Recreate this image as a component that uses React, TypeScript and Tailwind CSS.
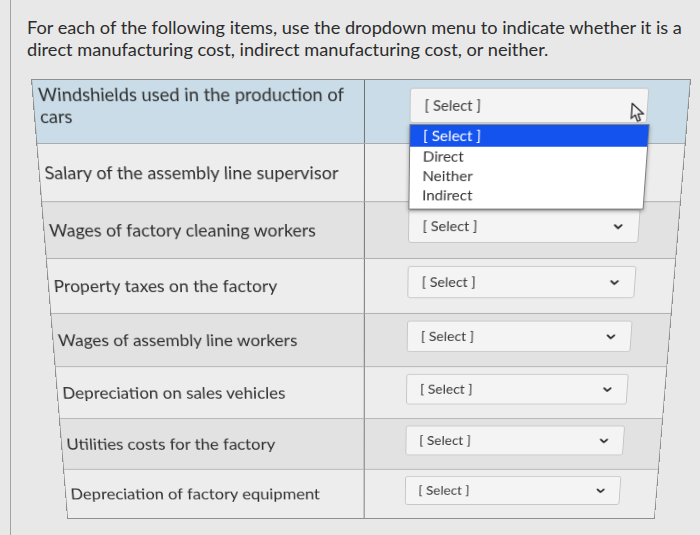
import React from 'react';
import { ChevronDown } from 'lucide-react';

const items = [
  'Windshields used in the production of cars',
  'Salary of the assembly line supervisor',
  'Wages of factory cleaning workers',
  'Property taxes on the factory',
  'Wages of assembly line workers',
  'Depreciation on sales vehicles',
  'Utilities costs for the factory',
  'Depreciation of factory equipment',
];

const options = ['[ Select ]', 'Direct', 'Neither', 'Indirect'];

const rowBg = (i: number) => {
  if (i === 0) return 'bg-[#c9dce7]';
  return i % 2 === 1 ? 'bg-[#ededed]' : 'bg-[#e2e2e2]';
};

const Cursor = () => (
  <svg width="15" height="23" viewBox="0 0 16 24" className="absolute right-[2px] top-[15px]">
    <path
      d="M1 1 L1 18 L5 14 L8 21 L11 20 L8 13 L14 13 Z"
      fill="#f4f4f4"
      stroke="#2a2a2a"
      strokeWidth="1.4"
      strokeLinejoin="round"
    />
  </svg>
);

const SelectBox = ({ open, hidden }: { open?: boolean; hidden?: boolean }) => (
  <div className={`relative h-[37px] w-[240px] ${hidden ? 'invisible' : ''}`}>
    <div className="flex h-full items-center justify-between rounded-[3px] border border-[#c4c4c4] bg-[#f4f4f4] pl-[14px] pr-[14px] text-[15px] text-[#3a3a3a]">
      <span>[ Select ]</span>
      {!open && <ChevronDown size={14} strokeWidth={3.4} className="text-[#2d2d2d]" />}
    </div>
    {open && <Cursor />}
    {open && (
      <div className="visible absolute left-0 top-[38px] z-10 w-[243px] border border-[#7d7d7d] bg-white pb-[4px] text-[15.5px] leading-[21px] text-[#333] shadow-[0_2px_4px_rgba(0,0,0,0.35)]">
        {options.map((o, i) => (
          <div
            key={o}
            className={
              i === 0
                ? 'bg-[#1553ee] px-[13px] leading-[23px] text-white'
                : 'px-[13px]'
            }
          >
            {o}
          </div>
        ))}
      </div>
    )}
  </div>
);

export default function App() {
  return (
    <div className="h-[535px] w-[700px] overflow-hidden bg-[#e8e8e8] font-['Lato',sans-serif]">
      <div className="ml-[10px] h-full border-l border-[#a3a3a3] pl-[16px] pt-[16px]">
        <p className="w-[672px] text-[18.2px] leading-[22px] text-[#2c2c2c]">
          For each of the following items, use the dropdown menu to indicate whether it is a
          direct manufacturing cost, indirect manufacturing cost, or neither.
        </p>
        <div className="mt-[19px] ml-[4px] w-[660px] origin-top [transform:perspective(1000px)_rotateX(-14deg)]">
          <div className="border border-[#8f8f8f]">
            {items.map((text, i) => (
              <div
                key={text}
                className={`flex ${i === 0 ? 'h-[66px]' : 'h-[63px]'} ${rowBg(i)} ${
                  i > 0 ? 'border-t border-[#a8a8a8]' : ''
                }`}
              >
                <div
                  className={`flex w-[333px] shrink-0 border-r border-[#6f6f6f] px-[5px] text-[18.4px] leading-[23px] text-[#2f2f2f] ${
                    i === 0 ? 'items-start pt-[4px]' : 'items-center'
                  }`}
                >
                  <span className={i === 0 ? 'w-[315px]' : ''}>{text}</span>
                </div>
                <div className={`flex flex-1 items-start pl-[45px] pt-[8px] ${i === 0 ? 'relative z-10' : ''}`}>
                  <SelectBox open={i === 0} hidden={i === 1} />
                </div>
              </div>
            ))}
          </div>
        </div>
      </div>
    </div>
  );
}
